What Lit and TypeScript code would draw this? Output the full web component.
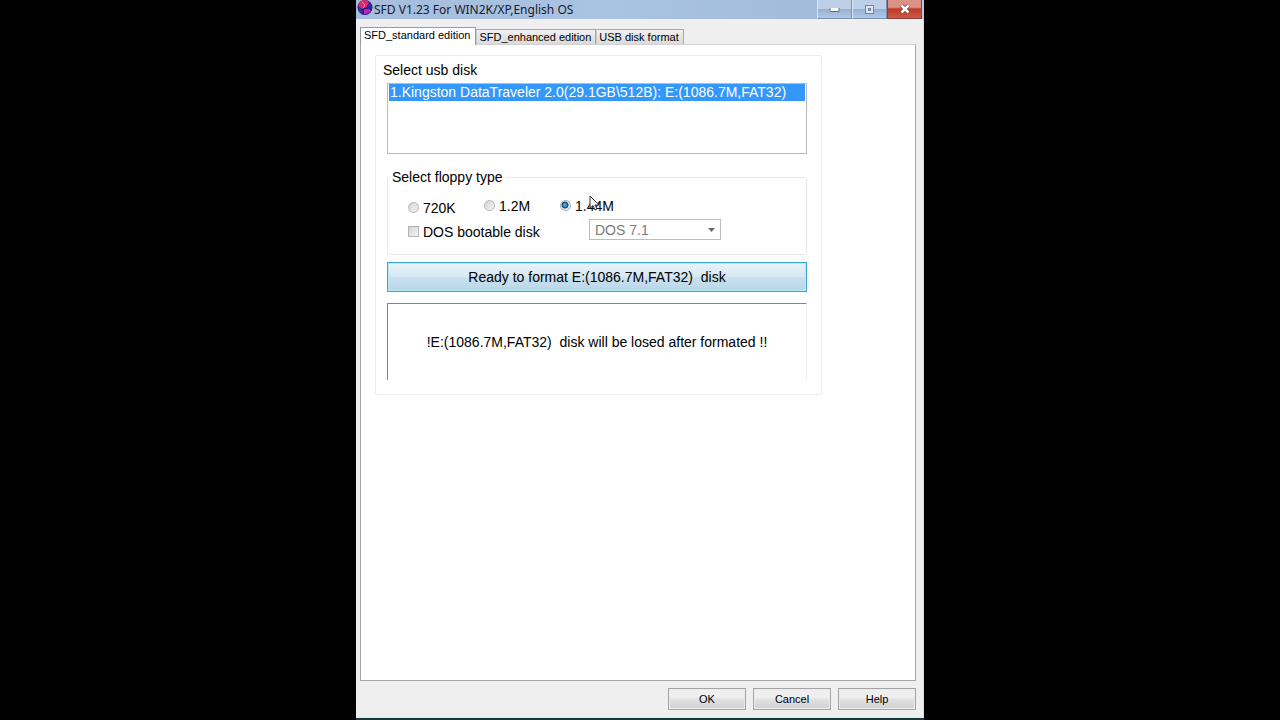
import { LitElement, html, css } from "lit";
import { customElement, state } from "lit/decorators.js";

const TABS = ["SFD_standard edition", "SFD_enhanced edition", "USB disk format"];
const TYPES = ["720K", "1.2M", "1.44M"];

@customElement("title-bar")
export class TitleBar extends LitElement {
  static styles = css`
    :host {
      display: flex;
      justify-content: space-between;
      height: 19px;
      background: linear-gradient(90deg, #a6bedb 0%, #a9c3e2 45%, #a2bbdb 80%, #b4cbe4 100%);
    }
    .caption {
      display: flex;
      font: 12px/19px "Noto Sans", "Open Sans", sans-serif;
      color: #15202e;
      white-space: nowrap;
    }
    .logo {
      width: 16px;
      height: 16px;
      margin: 0 1px;
    }
    .controls {
      display: flex;
      margin-right: 2px;
    }
    button {
      display: flex;
      align-items: center;
      justify-content: center;
      box-sizing: border-box;
      width: 35px;
      height: 19px;
      padding: 0;
      border: 1px solid #7990b0;
      border-top: 0;
      border-left-color: #dbe7f4;
      background: linear-gradient(#bdd0e7 0 48%, #96b1d3 50%, #afc8e4);
    }
    .close {
      border-color: #8c3f3c;
      background: linear-gradient(#dc9186 0 40%, #bd3c27 50%, #cc5a45);
    }
  `;

  render() {
    return html`
      <div class="caption">
        <svg class="logo" viewBox="0 0 16 16" aria-hidden="true">
          <circle cx="8" cy="7.500" r="7.500" fill="#35107a" />
          <path d="M3 1.500Q8-2 12 2L10 7 5 9 1 6Z" fill="#d42a72" />
          <path d="M12 2Q16 5 15 9L11 9 10 6Z" fill="#3126a8" />
          <path d="M1 7 5 9 6 14Q1 12 1 7Z" fill="#1c3fb4" />
          <path d="M7 9 12 9 14 11Q11 15 7 14Z" fill="#b12bb0" />
          <path d="M5 2 8 5 6 8" stroke="#ff77a2" fill="none" />
        </svg>
        <span>SFD V1.23 For WIN2K/XP,English OS</span>
      </div>
      <div class="controls">
        <button aria-label="Minimize">
          <svg width="11" height="6" viewBox="0 0 11 6">
            <rect x="1" y="2" width="9" height="3" fill="#fff" />
            <path d="M1 5.500H10M1 2V5M10 2V5" stroke="#5b6e88" fill="none" />
          </svg>
        </button>
        <button aria-label="Maximize">
          <svg width="9" height="9" viewBox="0 0 9 9">
            <rect x="0.500" y="0.500" width="8" height="8" fill="#dde7f2" stroke="#6f839c" />
            <rect x="3.500" y="3.500" width="2" height="2" fill="#a9bed8" stroke="#6f839c" />
          </svg>
        </button>
        <button class="close" aria-label="Close">
          <svg width="12" height="10" viewBox="0 0 12 10">
            <path d="M2.500 1.500 9.500 8.500M9.500 1.500 2.500 8.500" stroke="#7d3a34" stroke-width="4" />
            <path d="M2.500 1.500 9.500 8.500M9.500 1.500 2.500 8.500" stroke="#fff" stroke-width="2.500" />
          </svg>
        </button>
      </div>
    `;
  }
}

@customElement("format-panel")
export class FormatPanel extends LitElement {
  @state() floppy = "1.44M";

  static styles = css`
    :host {
      display: block;
      font: 14px/16px "Liberation Sans", Arial, sans-serif;
      color: #000;
    }
    .frame {
      display: flex;
      flex-direction: column;
      box-sizing: border-box;
      max-width: 447px;
      padding: 6px 14px 14px 11px;
      border: 1px solid #ececec;
      border-radius: 2px;
    }
    .heading {
      margin-left: -4px;
    }
    .disks {
      appearance: none;
      box-sizing: border-box;
      height: 71px;
      margin: 5px 0 0;
      padding: 0 1px;
      border: 1px solid #bcbcbc;
      border-radius: 0;
      outline: 0;
      overflow: hidden;
      background: #fff;
      font: inherit;
    }
    .disks option {
      min-height: 17px;
      padding: 0 1px;
      font: 14px/17px "Liberation Sans", Arial, sans-serif;
    }
    .disks option:checked {
      background: linear-gradient(#3397fb, #3397fb);
      color: #fff;
      -webkit-text-fill-color: #fff;
    }
    fieldset {
      min-width: 0;
      margin: 15px 0 0;
      padding: 10px 20px 12px;
      border: 1px solid #e9e9e9;
      border-radius: 2px;
    }
    legend {
      margin-left: -18px;
      padding: 0 2px;
    }
    .options {
      display: grid;
      grid-template-columns: 76px 76px 1fr;
      row-gap: 1px;
    }
    label {
      display: flex;
      align-items: center;
      gap: 4px;
      height: 21px;
      white-space: nowrap;
    }
    .lead {
      padding-top: 2px;
    }
    .wide {
      grid-column: span 2;
    }
    input {
      appearance: none;
      box-sizing: border-box;
      flex: none;
      width: 11px;
      height: 11px;
      margin: 0;
      border: 1px solid #b5b5b5;
      background: linear-gradient(135deg, #d4d4d4, #f4f4f4);
    }
    input[type="radio"] {
      border-radius: 50%;
    }
    input[type="radio"]:checked {
      border-color: #9fb0bd;
      background: radial-gradient(circle at 4px 4px, #8fd0ee 0, #2a6f9f 2px, #1d4f78 3px, #e6eef4 4px);
    }
    .combo {
      display: grid;
      width: 132px;
      margin-left: 29px;
    }
    .combo select,
    .combo svg {
      grid-area: 1 / 1;
    }
    .combo select {
      appearance: none;
      height: 21px;
      padding: 0 5px;
      border: 1px solid #bdbdbd;
      border-radius: 0;
      background: #fff;
      color: #7b7b7b;
      opacity: 1;
      font: inherit;
    }
    .combo svg {
      place-self: center end;
      margin-right: 6px;
      pointer-events: none;
    }
    .combo {
      align-self: start;
    }
    .format {
      height: 30px;
      margin-top: 7px;
      border: 1px solid #3aa5cc;
      box-shadow: inset 0 0 0 1px #b5ecfa;
      background: linear-gradient(#e9f3f9, #d7e8f2 48%, #c9e1ef 52%, #b8d6e8);
      color: #000;
      font: inherit;
      white-space: pre;
    }
    .message {
      display: flex;
      align-items: center;
      justify-content: center;
      height: 76px;
      margin-top: 11px;
      border: 1px solid #f1f1f1;
      border-top-color: #858585;
      border-left-color: #858585;
      border-bottom: 0;
      white-space: pre;
    }
  `;

  render() {
    return html`
      <section class="frame">
        <span class="heading" id="disk-label">Select usb disk</span>
        <select class="disks" size="4" aria-labelledby="disk-label">
          <option selected>1.Kingston DataTraveler 2.0(29.1GB\\512B): E:(1086.7M,FAT32)</option>
        </select>
        <fieldset>
          <legend>Select floppy type</legend>
          <div class="options">
            ${TYPES.map(
              (type, i) => html`<label class=${i === 0 ? "lead" : ""}>
                <input
                  type="radio"
                  name="floppy"
                  .checked=${this.floppy === type}
                  @change=${() => (this.floppy = type)}
                />${type}</label
              >`
            )}
            <label class="lead wide"><input type="checkbox" />DOS bootable disk</label>
            <div class="combo">
              <select disabled aria-label="DOS version">
                <option>DOS 7.1</option>
              </select>
              <svg width="7" height="4" viewBox="0 0 7 4"><path d="M0 0H7L3.500 4Z" fill="#6a6a6a" /></svg>
            </div>
          </div>
        </fieldset>
        <button class="format">Ready to format E:(1086.7M,FAT32)  disk</button>
        <div class="message">!E:(1086.7M,FAT32)  disk will be losed after formated !!</div>
      </section>
    `;
  }
}

@customElement("app-root")
export class AppRoot extends LitElement {
  @state() tab = 0;

  static styles = css`
    :host {
      display: flex;
      justify-content: center;
      position: relative;
      min-height: 100vh;
      background: #000;
      font: 11px/14px "Liberation Sans", Arial, sans-serif;
    }
    .window {
      display: flex;
      flex-direction: column;
      box-sizing: border-box;
      width: 100%;
      max-width: 568px;
      border-bottom: 2px solid #17393f;
      background: #efefef;
    }
    .body {
      display: flex;
      flex-direction: column;
      flex: 1;
      padding: 8px 7px 7px 4px;
      border-right: 1px solid #d5dfe8;
      border-bottom: 1px solid #dcecf2;
    }
    .tabs {
      display: flex;
      align-items: flex-end;
      height: 17px;
    }
    .tab {
      box-sizing: border-box;
      height: 15px;
      padding: 0 4px 2px 2px;
      border: 1px solid #a9a9a9;
      border-left-color: #c9c9c9;
      border-bottom: 0;
      background: linear-gradient(#f0f0f0, #dadada);
      color: #000;
      font: inherit;
      white-space: nowrap;
    }
    .tab[aria-selected="true"] {
      height: 18px;
      margin-bottom: -1px;
      padding: 0 5px 4px 3px;
      border-color: #9c9c9c;
      background: #fff;
      z-index: 1;
    }
    .page {
      flex: 1;
      padding: 10px 14px;
      border: 1px solid #a5a5a5;
      border-top-color: #d2d2d2;
      background: #fff;
    }
    .actions {
      display: flex;
      justify-content: flex-end;
      gap: 7px;
      margin-top: 7px;
    }
    .action {
      box-sizing: border-box;
      width: 78px;
      height: 22px;
      padding: 0;
      border: 1px solid #a3a3a3;
      box-shadow: inset 0 0 0 1px #ececec;
      background: linear-gradient(#efefef 0 40%, #e0e0e0 55%, #d0d0d0);
      color: #000;
      font: inherit;
    }
    .pointer {
      position: absolute;
      left: calc(50% - 51px);
      top: 195px;
      pointer-events: none;
    }
  `;

  render() {
    return html`
      <main class="window">
        <title-bar></title-bar>
        <div class="body">
          <div class="tabs" role="tablist">
            ${TABS.map(
              (name, i) => html`<button
                class="tab"
                role="tab"
                aria-selected=${this.tab === i ? "true" : "false"}
                @click=${() => (this.tab = i)}
              >${name}</button>`
            )}
          </div>
          <div class="page" role="tabpanel">
            ${this.tab === 0 ? html`<format-panel></format-panel>` : ""}
          </div>
          <div class="actions">
            <button class="action">OK</button>
            <button class="action">Cancel</button>
            <button class="action">Help</button>
          </div>
        </div>
      </main>
      <svg class="pointer" width="12" height="18" viewBox="0 0 12 18" aria-hidden="true">
        <path d="M1 1V13L4 10.500 6 15 8 14 6 10H10Z" fill="#fff" stroke="#333" />
      </svg>
    `;
  }
}
